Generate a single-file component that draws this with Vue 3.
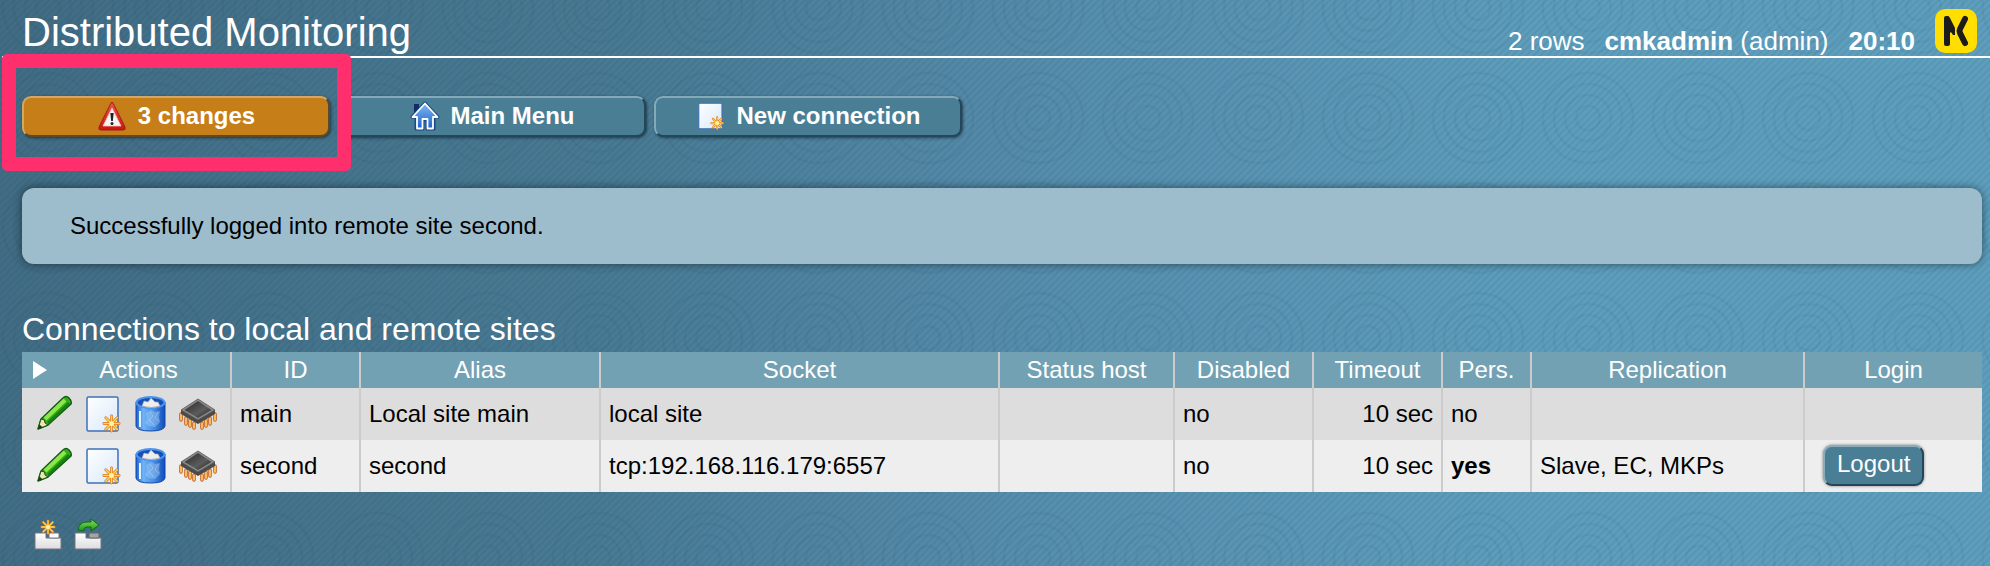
<template>
  <div class="page">
    <!-- shared icon shapes -->
    <svg class="sprite" aria-hidden="true">
      <defs>
        <linearGradient id="paper" x1="0" y1="0" x2="1" y2="1">
          <stop offset="0" stop-color="#fff" />
          <stop offset="1" stop-color="#d8e8fa" />
        </linearGradient>
        <linearGradient id="red" x1="0" y1="0" x2="0" y2="1">
          <stop offset="0" stop-color="#f0564a" />
          <stop offset="1" stop-color="#c81410" />
        </linearGradient>
        <linearGradient id="roof" x1="0" y1="0" x2="0" y2="1">
          <stop offset="0" stop-color="#7fb8f2" />
          <stop offset="1" stop-color="#1d62c8" />
        </linearGradient>
        <linearGradient id="can" x1="0" y1="0" x2="1" y2="0">
          <stop offset="0" stop-color="#1c5fd0" />
          <stop offset="0.25" stop-color="#6fb4f6" />
          <stop offset="0.6" stop-color="#4a90e4" />
          <stop offset="1" stop-color="#0f4cba" />
        </linearGradient>
        <linearGradient id="die" x1="0" y1="0" x2="1" y2="1">
          <stop offset="0" stop-color="#2a2a2a" />
          <stop offset="0.6" stop-color="#5c5c5c" />
          <stop offset="1" stop-color="#222" />
        </linearGradient>
        <linearGradient id="tray" x1="0" y1="0" x2="0" y2="1">
          <stop offset="0" stop-color="#fff" />
          <stop offset="1" stop-color="#dcdce2" />
        </linearGradient>
        <linearGradient id="leaf" x1="0" y1="0" x2="0" y2="1">
          <stop offset="0" stop-color="#8fe05a" />
          <stop offset="1" stop-color="#159a1a" />
        </linearGradient>
      </defs>
      <symbol id="spark" viewBox="0 0 20 20">
        <path d="M10 2v16M2 10h16M4 4l12 12M16 4L4 16" stroke="#dd7320" stroke-width="3" stroke-linecap="round" />
        <path d="M10 2v16M2 10h16M4 4l12 12M16 4L4 16" stroke="#ffd94f" stroke-width="1.6" stroke-linecap="round" />
        <circle cx="10" cy="10" r="2.5" fill="#fff3a8" />
      </symbol>
      <symbol id="warning" viewBox="0 0 30 30">
        <path d="M14 2q1-2 2 0l12 24q1 3-2 3H4q-3 0-2-3z" fill="url(#red)" stroke="#a01c18" />
        <path d="M15 7l9 18H6z" fill="#f4f4f4" stroke="#fbb" stroke-width="0.8" />
        <path d="M13.300 12h3.400l-.9 8h-1.600z" fill="#222" />
        <circle cx="15" cy="22.500" r="1.500" fill="#222" />
      </symbol>
      <symbol id="home" viewBox="0 0 30 30">
        <path d="M4 3h5v9H4z" fill="#122d63" />
        <path d="M15 2L2 16h4v12h7v-9h4v9h7V16h4z" fill="url(#roof)" stroke="#16488f" stroke-width="3" stroke-linejoin="round" />
        <path d="M15 2.500L2.500 16H7v11.500h5.500V18h5v9.500H23V16h4.500z" fill="url(#roof)" stroke="#fff" stroke-width="1.8" stroke-linejoin="round" />
      </symbol>
      <symbol id="new" viewBox="0 0 40 40">
        <rect x="5" y="3" width="31" height="34" rx="1.500" fill="url(#paper)" stroke="#3d72ba" stroke-width="1.5" />
        <use href="#spark" x="20" y="20" width="19" height="19" />
      </symbol>
      <symbol id="edit" viewBox="0 0 40 40">
        <path d="M4 35l3-10L29 4q3-3 6 0t2 6L14 31z" fill="#35ab1a" stroke="#145a12" stroke-width="1.5" stroke-linejoin="round" />
        <path d="M11 25L31 6" stroke="#8be84a" stroke-width="4" />
        <path d="M14 29L35 9" stroke="#16820f" stroke-width="2.5" />
        <path d="M4 35l3-10 3.500 1 .5 3 3 2z" fill="#f3e3b4" stroke="#145a12" />
        <path d="M4 35l1.500-4.500 3.300 3z" fill="#153f14" />
      </symbol>
      <symbol id="delete" viewBox="0 0 40 40">
        <path d="M6 8v24q1 5 14.500 5T35 32V8z" fill="url(#can)" stroke="#1047a8" />
        <ellipse cx="20.500" cy="8.500" rx="14" ry="5.500" fill="#1550b8" stroke="#4b93ee" stroke-width="2" />
        <path d="M12 12l2-5 4 1 3-4 4 4h3l2 4q-9 3-18 0z" fill="#eee" stroke="#aaa" stroke-width="0.7" />
        <path d="M16 19l5-3 4 2 5-1-1 6 1 5-5 5-6-1-4-3 2-4z" fill="#a9d0f5" opacity="0.4" />
        <path d="M20 18l3 4-4 4 5 5M28 18l-3 6 4 3" fill="none" stroke="#d6eafc" opacity="0.35" />
        <path d="M10 17v16" stroke="#e2f2ff" stroke-width="2" />
      </symbol>
      <symbol id="chip" viewBox="0 0 40 40">
        <path d="M3 20v6M8 24v6M12 26v6M16 29v5M37 20v6M32 24v6M28 26v6M24 29v5" stroke="#c2541a" stroke-width="3.5" stroke-linecap="round" />
        <path d="M3 20v6M8 24v6M12 26v6M16 29v5M37 20v6M32 24v6M28 26v6M24 29v5" stroke="#ffd069" stroke-width="1.7" stroke-linecap="round" />
        <path d="M3 16v4l17 10 17-10v-4z" fill="#4a4a4a" />
        <path d="M20 5L3 16l17 10 17-10z" fill="#8b8b8b" stroke="#555" stroke-width="0.8" />
        <path d="M20 7L6.500 16 20 24l13.500-8z" fill="url(#die)" />
      </symbol>
      <symbol id="add" viewBox="0 0 30 32">
        <path d="M2 15h11v5h15v11H2z" fill="url(#tray)" stroke="#77777c" />
        <rect x="16" y="15" width="10" height="5" rx="1" fill="#fff" stroke="#77777c" />
        <use href="#spark" x="7" y="1" width="16" height="16" />
      </symbol>
      <symbol id="move" viewBox="0 0 30 32">
        <path d="M2 15h11v5h15v11H2z" fill="url(#tray)" stroke="#77777c" />
        <rect x="16" y="15" width="10" height="5" rx="1" fill="#a4a4a8" stroke="#66666a" />
        <path d="M5 12q1-8 9-8h4V1l8 6-8 6v-4h-4q-3 0-4 4z" fill="url(#leaf)" stroke="#0e6a14" stroke-linejoin="round" />
      </symbol>
    </svg>

    <header class="top">
      <h1>Distributed Monitoring</h1>
      <div class="status">
        <span>2 rows</span>
        <span><b>cmkadmin</b> (admin)</span>
        <b>20:10</b>
        <svg class="logo" viewBox="0 0 42 44" role="img" aria-label="Checkmk">
          <rect width="42" height="44" rx="10" fill="#ffde00" />
          <path d="M9 9q0-2 2-2h2q1 0 2 2l5 10v7h-2l-2-3-1 1v11q0 2-2 2h-2q-2 0-2-2z" fill="#1c1c1a" />
          <path d="M30 10l-5 10q-1 2 0 4l5 10" fill="none" stroke="#1c1c1a" stroke-width="6" stroke-linecap="round" stroke-linejoin="round" />
        </svg>
      </div>
    </header>

    <nav class="buttons">
      <div v-for="b in buttons" :key="b.text" class="slot">
        <button type="button" class="context" :class="{ changes: b.marked }">
          <svg class="small"><use :href="'#' + b.icon" /></svg>
          {{ b.text }}
        </button>
        <div v-if="b.marked" class="marker"></div>
      </div>
    </nav>

    <div class="message">Successfully logged into remote site second.</div>

    <h2>Connections to local and remote sites</h2>
    <table>
      <colgroup>
        <col v-for="c in columns" :key="c" :class="c.toLowerCase().replace(/\W/g, '')" />
      </colgroup>
      <thead>
        <tr>
          <th>
            <div class="first">
              <button type="button" class="toggle" aria-label="Toggle options"></button>
              <span>Actions</span>
            </div>
          </th>
          <th v-for="c in columns.slice(1)" :key="c">{{ c }}</th>
        </tr>
      </thead>
      <tbody>
        <tr v-for="s in sites" :key="s.id">
          <td>
            <div class="icons">
              <a v-for="i in actions" :key="i.icon" href="#" :aria-label="i.label">
                <svg class="icon"><use :href="'#' + i.icon" /></svg>
              </a>
            </div>
          </td>
          <td>{{ s.id }}</td>
          <td>{{ s.alias }}</td>
          <td>{{ s.socket }}</td>
          <td></td>
          <td>no</td>
          <td class="number">{{ s.timeout }}</td>
          <td><b v-if="s.persist">yes</b><template v-else>no</template></td>
          <td>{{ s.replication }}</td>
          <td><button v-if="s.loggedIn" type="button" class="logout">Logout</button></td>
        </tr>
      </tbody>
    </table>

    <footer>
      <a href="#" aria-label="Add to dashboard"><svg class="foot"><use href="#add" /></svg></a>
      <a href="#" aria-label="Export"><svg class="foot"><use href="#move" /></svg></a>
    </footer>
  </div>
</template>

<script setup>
import { ref } from 'vue';

const buttons = [
  { text: '3 changes', icon: 'warning', marked: true },
  { text: 'Main Menu', icon: 'home' },
  { text: 'New connection', icon: 'new' },
]

const columns = ['Actions', 'ID', 'Alias', 'Socket', 'Status host', 'Disabled', 'Timeout', 'Pers.', 'Replication', 'Login']

const actions = [
  { icon: 'edit', label: 'Properties' },
  { icon: 'new', label: 'Clone' },
  { icon: 'delete', label: 'Delete' },
  { icon: 'chip', label: 'Global settings' },
]

const sites = ref([
  { id: 'main', alias: 'Local site main', socket: 'local site', timeout: '10 sec', persist: false, replication: '', loggedIn: false },
  { id: 'second', alias: 'second', socket: 'tcp:192.168.116.179:6557', timeout: '10 sec', persist: true, replication: 'Slave, EC, MKPs', loggedIn: true },
])
</script>

<style>
body {
  margin: 0;
}
</style>

<style scoped>
.page {
  min-height: 100vh;
  box-sizing: border-box;
  padding: 0 8px 16px 22px;
  font-family: "Liberation Sans", Arial, sans-serif;
  font-size: 24px;
  line-height: 28px;
  color: #000;
  /* fine diagonal weave, faint rings, left to right shade */
  background:
    linear-gradient(135deg, rgba(20, 60, 90, 0.12), transparent 25%, rgba(20, 60, 90, 0.12) 50%, transparent 75%, rgba(20, 60, 90, 0.12)) 0 0 / 7px 7px,
    radial-gradient(circle, transparent 10px, rgba(20, 60, 80, 0.08) 12px, transparent 14px 21px, rgba(20, 60, 80, 0.08) 23px, transparent 25px 32px, rgba(20, 60, 80, 0.08) 34px, transparent 36px 43px, rgba(20, 60, 80, 0.08) 45px, transparent 47px) -7px -47px / 110px 110px,
    linear-gradient(96deg, #426d84, #4a7c95 32%, #578fae 52%, #60a1bf 78%, #60a1bf);
}
.sprite {
  position: absolute;
  width: 0;
  height: 0;
}
.top {
  display: flex;
  justify-content: space-between;
  align-items: flex-end;
  height: 56px;
  margin: 0 -8px 0 -20px;
  padding: 0 13px 0 20px;
  border-bottom: 2px solid #fff;
  color: #fff;
}
h1 {
  margin: 0;
  font-size: 40px;
  line-height: 48px;
  font-weight: normal;
}
.status {
  display: flex;
  align-items: flex-end;
  gap: 20px;
  font-size: 26px;
  line-height: 30px;
}
.logo {
  width: 42px;
  height: 44px;
  margin-bottom: 3px;
}
.buttons {
  display: flex;
  gap: 8px;
  margin-top: 38px;
}
.slot {
  position: relative;
}
.context {
  display: flex;
  align-items: center;
  justify-content: center;
  gap: 11px;
  width: 308px;
  height: 41px;
  padding: 0 0 2px;
  font: bold 24px/28px "Liberation Sans", Arial, sans-serif;
  color: #fff;
  background: #4a7e94;
  border: 2px solid;
  border-color: #84a9b9 #23475a #23475a #84a9b9;
  border-radius: 9px;
  box-shadow: 1px 1px 3px rgba(0, 0, 0, 0.5);
}
.changes {
  background: #c67e18;
  border-color: #d3a866 #5a4a2c #5a4a2c #d3a866;
}
.small {
  width: 30px;
  height: 30px;
}
/* highlight frame round the pending changes button */
.marker {
  position: absolute;
  inset: -42px -21px -34px -20px;
  z-index: 1;
  border: 14px solid #ff2e6d;
  border-radius: 5px;
  pointer-events: none;
}
.message {
  margin-top: 51px;
  padding: 24px 48px;
  background: #9dbdcd;
  border-radius: 12px;
  box-shadow: 0 0 8px rgba(0, 0, 0, 0.5);
}
h2 {
  margin: 47px 0 5px;
  font-size: 32px;
  line-height: 36px;
  font-weight: normal;
  color: #fff;
}
table {
  width: 100%;
  table-layout: fixed;
  border-collapse: separate;
  border-spacing: 0;
}
.actions { width: 210px; }
.id { width: 129px; }
.alias { width: 240px; }
.statushost { width: 175px; }
.disabled { width: 139px; }
.timeout { width: 129px; }
.pers { width: 89px; }
.replication { width: 273px; }
.login { width: 177px; }
th {
  height: 36px;
  padding: 0;
  font-weight: normal;
  color: #fff;
  background: #73a1b4;
}
td {
  height: 52px;
  padding: 0 8px;
}
th,
td {
  box-sizing: border-box;
  border-right: 2px solid #ccc;
  white-space: nowrap;
}
th:last-child,
td:last-child {
  border-right: 0;
}
tbody tr {
  background: #ddd;
}
tbody tr:nth-child(even) {
  background: #eee;
}
.first {
  display: flex;
  align-items: center;
}
.first span {
  flex: 1;
}
.toggle {
  width: 0;
  height: 0;
  margin: 0 0 0 11px;
  padding: 0;
  background: none;
  border: solid transparent;
  border-width: 9px 0 9px 14px;
  border-left-color: #fff;
}
.icons {
  display: flex;
  gap: 8px;
  padding-left: 4px;
}
.icon {
  display: block;
  width: 40px;
  height: 40px;
}
.number {
  text-align: right;
}
.logout {
  display: block;
  height: 41px;
  margin: 0 0 2px 10px;
  padding: 0 12px 2px;
  font: 24px/28px "Liberation Sans", Arial, sans-serif;
  color: #fff;
  background: #4a7e94;
  border: 2px solid;
  border-color: #8badb9 #23475a #23475a #8badb9;
  border-radius: 9px;
  box-shadow: 0 0 3px rgba(0, 0, 0, 0.5);
}
footer {
  display: flex;
  gap: 10px;
  margin-top: 26px;
  padding-left: 11px;
}
.foot {
  display: block;
  width: 30px;
  height: 32px;
}
</style>
